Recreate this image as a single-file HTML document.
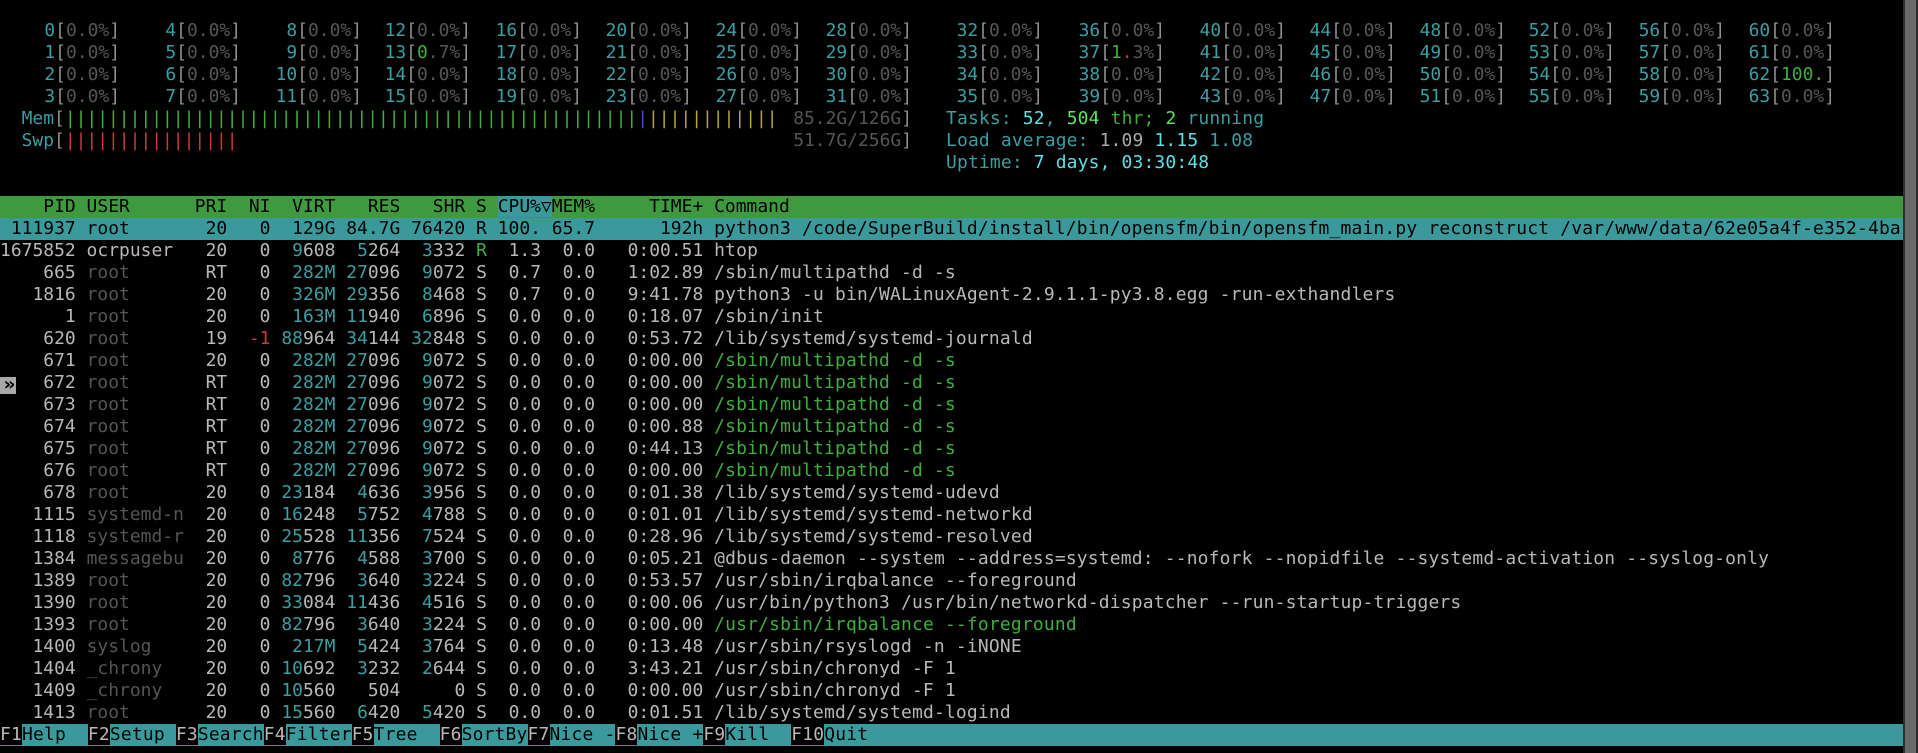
<!DOCTYPE html>
<html><head><meta charset="utf-8"><style>
html,body{margin:0;padding:0;background:#000;}
body{width:1918px;height:753px;position:relative;overflow:hidden;font-family:"DejaVu Sans Mono","Liberation Mono",monospace;font-size:17.94px;line-height:22px;color:#b8b8b8;}
.r{position:absolute;left:0;width:1903px;height:22px;white-space:pre;letter-spacing:0.02px;overflow:hidden}
i,b{font-style:normal;font-weight:normal}
b{letter-spacing:0.19px}
.t{color:#3a9ea2}
.u{color:#555}
.gr{color:#3fae3f}
.bg{color:#5fe35f}
.cy{color:#5fe0e6}
.rd{color:#c83a3a}
.yl{color:#b5a82c}
.bl{color:#4b4bd0}
.bk{color:#8f8f8f}
.m{position:absolute;white-space:pre;height:22px;text-align:right}
.tx{letter-spacing:0.17px}
.hdr{background:#3f993f;color:#000}
.sel{background:#3a9a9b;color:#000}
.fk{background:#000;color:#b8b8b8}
.fb{letter-spacing:0.19px}
</style></head><body>
<!-- CPU meters -->
<div class="m" style="top:20px;right:1798px"><i class="t">0</i><i class="bk">[</i><i class="u">0.0%</i><i class="bk">]</i></div>
<div class="m" style="top:42px;right:1798px"><i class="t">1</i><i class="bk">[</i><i class="u">0.0%</i><i class="bk">]</i></div>
<div class="m" style="top:64px;right:1798px"><i class="t">2</i><i class="bk">[</i><i class="u">0.0%</i><i class="bk">]</i></div>
<div class="m" style="top:86px;right:1798px"><i class="t">3</i><i class="bk">[</i><i class="u">0.0%</i><i class="bk">]</i></div>
<div class="m" style="top:20px;right:1677px"><i class="t">4</i><i class="bk">[</i><i class="u">0.0%</i><i class="bk">]</i></div>
<div class="m" style="top:42px;right:1677px"><i class="t">5</i><i class="bk">[</i><i class="u">0.0%</i><i class="bk">]</i></div>
<div class="m" style="top:64px;right:1677px"><i class="t">6</i><i class="bk">[</i><i class="u">0.0%</i><i class="bk">]</i></div>
<div class="m" style="top:86px;right:1677px"><i class="t">7</i><i class="bk">[</i><i class="u">0.0%</i><i class="bk">]</i></div>
<div class="m" style="top:20px;right:1556px"><i class="t">8</i><i class="bk">[</i><i class="u">0.0%</i><i class="bk">]</i></div>
<div class="m" style="top:42px;right:1556px"><i class="t">9</i><i class="bk">[</i><i class="u">0.0%</i><i class="bk">]</i></div>
<div class="m" style="top:64px;right:1556px"><i class="t">10</i><i class="bk">[</i><i class="u">0.0%</i><i class="bk">]</i></div>
<div class="m" style="top:86px;right:1556px"><i class="t">11</i><i class="bk">[</i><i class="u">0.0%</i><i class="bk">]</i></div>
<div class="m" style="top:20px;right:1447px"><i class="t">12</i><i class="bk">[</i><i class="u">0.0%</i><i class="bk">]</i></div>
<div class="m" style="top:42px;right:1447px"><i class="t">13</i><i class="bk">[</i><i class="gr">0</i><i class="u">.7%</i><i class="bk">]</i></div>
<div class="m" style="top:64px;right:1447px"><i class="t">14</i><i class="bk">[</i><i class="u">0.0%</i><i class="bk">]</i></div>
<div class="m" style="top:86px;right:1447px"><i class="t">15</i><i class="bk">[</i><i class="u">0.0%</i><i class="bk">]</i></div>
<div class="m" style="top:20px;right:1336px"><i class="t">16</i><i class="bk">[</i><i class="u">0.0%</i><i class="bk">]</i></div>
<div class="m" style="top:42px;right:1336px"><i class="t">17</i><i class="bk">[</i><i class="u">0.0%</i><i class="bk">]</i></div>
<div class="m" style="top:64px;right:1336px"><i class="t">18</i><i class="bk">[</i><i class="u">0.0%</i><i class="bk">]</i></div>
<div class="m" style="top:86px;right:1336px"><i class="t">19</i><i class="bk">[</i><i class="u">0.0%</i><i class="bk">]</i></div>
<div class="m" style="top:20px;right:1226px"><i class="t">20</i><i class="bk">[</i><i class="u">0.0%</i><i class="bk">]</i></div>
<div class="m" style="top:42px;right:1226px"><i class="t">21</i><i class="bk">[</i><i class="u">0.0%</i><i class="bk">]</i></div>
<div class="m" style="top:64px;right:1226px"><i class="t">22</i><i class="bk">[</i><i class="u">0.0%</i><i class="bk">]</i></div>
<div class="m" style="top:86px;right:1226px"><i class="t">23</i><i class="bk">[</i><i class="u">0.0%</i><i class="bk">]</i></div>
<div class="m" style="top:20px;right:1116px"><i class="t">24</i><i class="bk">[</i><i class="u">0.0%</i><i class="bk">]</i></div>
<div class="m" style="top:42px;right:1116px"><i class="t">25</i><i class="bk">[</i><i class="u">0.0%</i><i class="bk">]</i></div>
<div class="m" style="top:64px;right:1116px"><i class="t">26</i><i class="bk">[</i><i class="u">0.0%</i><i class="bk">]</i></div>
<div class="m" style="top:86px;right:1116px"><i class="t">27</i><i class="bk">[</i><i class="u">0.0%</i><i class="bk">]</i></div>
<div class="m" style="top:20px;right:1006px"><i class="t">28</i><i class="bk">[</i><i class="u">0.0%</i><i class="bk">]</i></div>
<div class="m" style="top:42px;right:1006px"><i class="t">29</i><i class="bk">[</i><i class="u">0.0%</i><i class="bk">]</i></div>
<div class="m" style="top:64px;right:1006px"><i class="t">30</i><i class="bk">[</i><i class="u">0.0%</i><i class="bk">]</i></div>
<div class="m" style="top:86px;right:1006px"><i class="t">31</i><i class="bk">[</i><i class="u">0.0%</i><i class="bk">]</i></div>
<div class="m" style="top:20px;right:875px"><i class="t">32</i><i class="bk">[</i><i class="u">0.0%</i><i class="bk">]</i></div>
<div class="m" style="top:42px;right:875px"><i class="t">33</i><i class="bk">[</i><i class="u">0.0%</i><i class="bk">]</i></div>
<div class="m" style="top:64px;right:875px"><i class="t">34</i><i class="bk">[</i><i class="u">0.0%</i><i class="bk">]</i></div>
<div class="m" style="top:86px;right:875px"><i class="t">35</i><i class="bk">[</i><i class="u">0.0%</i><i class="bk">]</i></div>
<div class="m" style="top:20px;right:753px"><i class="t">36</i><i class="bk">[</i><i class="u">0.0%</i><i class="bk">]</i></div>
<div class="m" style="top:42px;right:753px"><i class="t">37</i><i class="bk">[</i><i class="gr">1</i><i class="rd">.</i><i class="u">3%</i><i class="bk">]</i></div>
<div class="m" style="top:64px;right:753px"><i class="t">38</i><i class="bk">[</i><i class="u">0.0%</i><i class="bk">]</i></div>
<div class="m" style="top:86px;right:753px"><i class="t">39</i><i class="bk">[</i><i class="u">0.0%</i><i class="bk">]</i></div>
<div class="m" style="top:20px;right:632px"><i class="t">40</i><i class="bk">[</i><i class="u">0.0%</i><i class="bk">]</i></div>
<div class="m" style="top:42px;right:632px"><i class="t">41</i><i class="bk">[</i><i class="u">0.0%</i><i class="bk">]</i></div>
<div class="m" style="top:64px;right:632px"><i class="t">42</i><i class="bk">[</i><i class="u">0.0%</i><i class="bk">]</i></div>
<div class="m" style="top:86px;right:632px"><i class="t">43</i><i class="bk">[</i><i class="u">0.0%</i><i class="bk">]</i></div>
<div class="m" style="top:20px;right:522px"><i class="t">44</i><i class="bk">[</i><i class="u">0.0%</i><i class="bk">]</i></div>
<div class="m" style="top:42px;right:522px"><i class="t">45</i><i class="bk">[</i><i class="u">0.0%</i><i class="bk">]</i></div>
<div class="m" style="top:64px;right:522px"><i class="t">46</i><i class="bk">[</i><i class="u">0.0%</i><i class="bk">]</i></div>
<div class="m" style="top:86px;right:522px"><i class="t">47</i><i class="bk">[</i><i class="u">0.0%</i><i class="bk">]</i></div>
<div class="m" style="top:20px;right:412px"><i class="t">48</i><i class="bk">[</i><i class="u">0.0%</i><i class="bk">]</i></div>
<div class="m" style="top:42px;right:412px"><i class="t">49</i><i class="bk">[</i><i class="u">0.0%</i><i class="bk">]</i></div>
<div class="m" style="top:64px;right:412px"><i class="t">50</i><i class="bk">[</i><i class="u">0.0%</i><i class="bk">]</i></div>
<div class="m" style="top:86px;right:412px"><i class="t">51</i><i class="bk">[</i><i class="u">0.0%</i><i class="bk">]</i></div>
<div class="m" style="top:20px;right:303px"><i class="t">52</i><i class="bk">[</i><i class="u">0.0%</i><i class="bk">]</i></div>
<div class="m" style="top:42px;right:303px"><i class="t">53</i><i class="bk">[</i><i class="u">0.0%</i><i class="bk">]</i></div>
<div class="m" style="top:64px;right:303px"><i class="t">54</i><i class="bk">[</i><i class="u">0.0%</i><i class="bk">]</i></div>
<div class="m" style="top:86px;right:303px"><i class="t">55</i><i class="bk">[</i><i class="u">0.0%</i><i class="bk">]</i></div>
<div class="m" style="top:20px;right:193px"><i class="t">56</i><i class="bk">[</i><i class="u">0.0%</i><i class="bk">]</i></div>
<div class="m" style="top:42px;right:193px"><i class="t">57</i><i class="bk">[</i><i class="u">0.0%</i><i class="bk">]</i></div>
<div class="m" style="top:64px;right:193px"><i class="t">58</i><i class="bk">[</i><i class="u">0.0%</i><i class="bk">]</i></div>
<div class="m" style="top:86px;right:193px"><i class="t">59</i><i class="bk">[</i><i class="u">0.0%</i><i class="bk">]</i></div>
<div class="m" style="top:20px;right:83px"><i class="t">60</i><i class="bk">[</i><i class="u">0.0%</i><i class="bk">]</i></div>
<div class="m" style="top:42px;right:83px"><i class="t">61</i><i class="bk">[</i><i class="u">0.0%</i><i class="bk">]</i></div>
<div class="m" style="top:64px;right:83px"><i class="t">62</i><i class="bk">[</i><i class="gr">100.</i><i class="bk">]</i></div>
<div class="m" style="top:86px;right:83px"><i class="t">63</i><i class="bk">[</i><i class="u">0.0%</i><i class="bk">]</i></div>
<!-- Mem / Swp -->
<div class="m" style="top:108px;left:21.6px;text-align:left"><i class="t">Mem</i><i class="bk">[</i><i class="gr">|||||||||||||||||||||||||||||||||||||||||||||||||||||</i><i class="bl">|</i><i class="yl">||||||||||||</i></div>
<div class="m" style="top:108px;right:1006px"><i class="u">85.2G/126G</i><i class="bk">]</i></div>
<div class="m" style="top:130px;left:21.6px;text-align:left"><i class="t">Swp</i><i class="bk">[</i><i class="rd">||||||||||||||||</i></div>
<div class="m" style="top:130px;right:1006px"><i class="u">51.7G/256G</i><i class="bk">]</i></div>
<div class="m tx" style="top:108px;left:946px;text-align:left"><i class="t">Tasks: </i><i class="cy">52</i><i class="t">, </i><i class="bg">504</i><i class="gr"> thr; </i><i class="bg">2</i><i class="t"> running</i></div>
<div class="m tx" style="top:130px;left:946px;text-align:left"><i class="t">Load average: </i><i style="color:#aaa">1.09 </i><i class="cy">1.15 </i><i class="t">1.08</i></div>
<div class="m tx" style="top:152px;left:946px;text-align:left"><i class="t">Uptime: </i><i class="cy">7 days, 03:30:48</i></div>

<!-- process table -->
<div class="r hdr" style="top:196px">    PID USER      PRI  NI  VIRT   RES   SHR S <i style="background:#3a9a9b">CPU%▽</i>MEM%     TIME+ Command</div>
<div class="r sel" style="top:218px"> 111937 root       20   0  129G 84.7G 76420 R 100. 65.7      192h <b>python3 /code/SuperBuild/install/bin/opensfm/bin/opensfm_main.py reconstruct /var/www/data/62e05a4f-e352-4ba</b></div>
<div class="r" style="top:240px">1675852 ocrpuser   20   0  <i class="t">9</i>608  <i class="t">5</i>264  <i class="t">3</i>332 <i class="gr">R</i>  1.3  0.0   0:00.51 <b>htop</b></div>
<div class="r" style="top:262px">    665 <i class="u">root</i>       RT   0  <i class="t">282M</i> <i class="t">27</i>096  <i class="t">9</i>072 S  0.7  0.0   1:02.89 <b>/sbin/multipathd -d -s</b></div>
<div class="r" style="top:284px">   1816 <i class="u">root</i>       20   0  <i class="t">326M</i> <i class="t">29</i>356  <i class="t">8</i>468 S  0.7  0.0   9:41.78 <b>python3 -u bin/WALinuxAgent-2.9.1.1-py3.8.egg -run-exthandlers</b></div>
<div class="r" style="top:306px">      1 <i class="u">root</i>       20   0  <i class="t">163M</i> <i class="t">11</i>940  <i class="t">6</i>896 S  0.0  0.0   0:18.07 <b>/sbin/init</b></div>
<div class="r" style="top:328px">    620 <i class="u">root</i>       19  <i class="rd">-1</i> <i class="t">88</i>964 <i class="t">34</i>144 <i class="t">32</i>848 S  0.0  0.0   0:53.72 <b>/lib/systemd/systemd-journald</b></div>
<div class="r" style="top:350px">    671 <i class="u">root</i>       20   0  <i class="t">282M</i> <i class="t">27</i>096  <i class="t">9</i>072 S  0.0  0.0   0:00.00 <b class="gr">/sbin/multipathd -d -s</b></div>
<div class="r" style="top:372px">    672 <i class="u">root</i>       RT   0  <i class="t">282M</i> <i class="t">27</i>096  <i class="t">9</i>072 S  0.0  0.0   0:00.00 <b class="gr">/sbin/multipathd -d -s</b></div>
<div class="r" style="top:394px">    673 <i class="u">root</i>       RT   0  <i class="t">282M</i> <i class="t">27</i>096  <i class="t">9</i>072 S  0.0  0.0   0:00.00 <b class="gr">/sbin/multipathd -d -s</b></div>
<div class="r" style="top:416px">    674 <i class="u">root</i>       RT   0  <i class="t">282M</i> <i class="t">27</i>096  <i class="t">9</i>072 S  0.0  0.0   0:00.88 <b class="gr">/sbin/multipathd -d -s</b></div>
<div class="r" style="top:438px">    675 <i class="u">root</i>       RT   0  <i class="t">282M</i> <i class="t">27</i>096  <i class="t">9</i>072 S  0.0  0.0   0:44.13 <b class="gr">/sbin/multipathd -d -s</b></div>
<div class="r" style="top:460px">    676 <i class="u">root</i>       RT   0  <i class="t">282M</i> <i class="t">27</i>096  <i class="t">9</i>072 S  0.0  0.0   0:00.00 <b class="gr">/sbin/multipathd -d -s</b></div>
<div class="r" style="top:482px">    678 <i class="u">root</i>       20   0 <i class="t">23</i>184  <i class="t">4</i>636  <i class="t">3</i>956 S  0.0  0.0   0:01.38 <b>/lib/systemd/systemd-udevd</b></div>
<div class="r" style="top:504px">   1115 <i class="u">systemd-n</i>  20   0 <i class="t">16</i>248  <i class="t">5</i>752  <i class="t">4</i>788 S  0.0  0.0   0:01.01 <b>/lib/systemd/systemd-networkd</b></div>
<div class="r" style="top:526px">   1118 <i class="u">systemd-r</i>  20   0 <i class="t">25</i>528 <i class="t">11</i>356  <i class="t">7</i>524 S  0.0  0.0   0:28.96 <b>/lib/systemd/systemd-resolved</b></div>
<div class="r" style="top:548px">   1384 <i class="u">messagebu</i>  20   0  <i class="t">8</i>776  <i class="t">4</i>588  <i class="t">3</i>700 S  0.0  0.0   0:05.21 <b>@dbus-daemon --system --address=systemd: --nofork --nopidfile --systemd-activation --syslog-only</b></div>
<div class="r" style="top:570px">   1389 <i class="u">root</i>       20   0 <i class="t">82</i>796  <i class="t">3</i>640  <i class="t">3</i>224 S  0.0  0.0   0:53.57 <b>/usr/sbin/irqbalance --foreground</b></div>
<div class="r" style="top:592px">   1390 <i class="u">root</i>       20   0 <i class="t">33</i>084 <i class="t">11</i>436  <i class="t">4</i>516 S  0.0  0.0   0:00.06 <b>/usr/bin/python3 /usr/bin/networkd-dispatcher --run-startup-triggers</b></div>
<div class="r" style="top:614px">   1393 <i class="u">root</i>       20   0 <i class="t">82</i>796  <i class="t">3</i>640  <i class="t">3</i>224 S  0.0  0.0   0:00.00 <b class="gr">/usr/sbin/irqbalance --foreground</b></div>
<div class="r" style="top:636px">   1400 <i class="u">syslog</i>     20   0  <i class="t">217M</i>  <i class="t">5</i>424  <i class="t">3</i>764 S  0.0  0.0   0:13.48 <b>/usr/sbin/rsyslogd -n -iNONE</b></div>
<div class="r" style="top:658px">   1404 <i class="u">_chrony</i>    20   0 <i class="t">10</i>692  <i class="t">3</i>232  <i class="t">2</i>644 S  0.0  0.0   3:43.21 <b>/usr/sbin/chronyd -F 1</b></div>
<div class="r" style="top:680px">   1409 <i class="u">_chrony</i>    20   0 <i class="t">10</i>560   504     0 S  0.0  0.0   0:00.00 <b>/usr/sbin/chronyd -F 1</b></div>
<div class="r" style="top:702px">   1413 <i class="u">root</i>       20   0 <i class="t">15</i>560  <i class="t">6</i>420  <i class="t">5</i>420 S  0.0  0.0   0:01.51 <b>/lib/systemd/systemd-logind</b></div>
<!-- function bar -->
<div class="r fb" style="top:724px;background:#3a9a9b;color:#000"><i class="fk">F1</i>Help  <i class="fk">F2</i>Setup <i class="fk">F3</i>Search<i class="fk">F4</i>Filter<i class="fk">F5</i>Tree  <i class="fk">F6</i>SortBy<i class="fk">F7</i>Nice -<i class="fk">F8</i>Nice +<i class="fk">F9</i>Kill  <i class="fk">F10</i>Quit  </div>
<!-- marker -->
<div style="position:absolute;left:0;top:377px;width:16px;height:17px;background:#a8a8a8;color:#000;font-size:18px;line-height:16px;text-align:center;font-family:'DejaVu Sans',sans-serif;font-weight:bold;letter-spacing:-3px">››</div>
<!-- scrollbar -->
<div style="position:absolute;left:1903px;top:0;width:15px;height:753px;background:#2e2e2e"></div>
<div style="position:absolute;left:1905px;top:0;width:11px;height:753px;background:#6b6b6b"></div>
</body></html>
